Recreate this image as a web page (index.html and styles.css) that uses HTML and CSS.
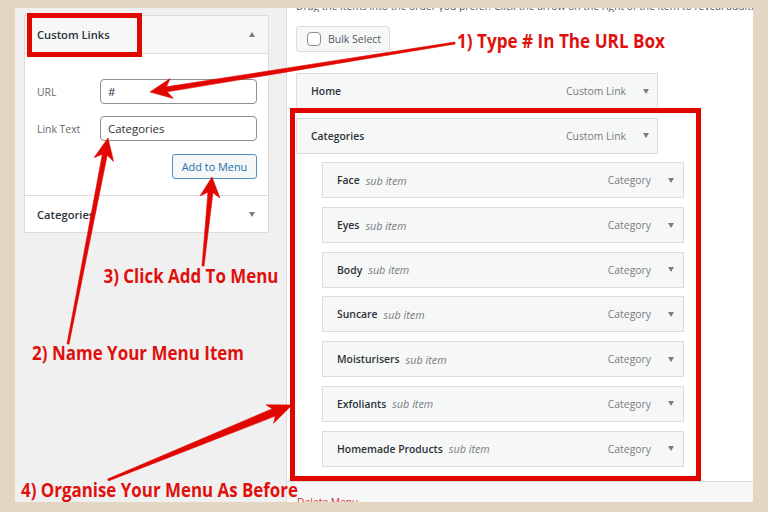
FILE: index.html
```html
<!DOCTYPE html>
<html lang="en">
<head>
<meta charset="utf-8">
<title>Menus - Custom Links</title>
<link rel="stylesheet" href="styles.css">
</head>
<body>
<div class="shot">
  <aside class="side">
    <div class="acc">
      <div class="acc-head open"><span>Custom Links</span><i class="tri up"></i></div>
      <div class="acc-body">
        <label class="lbl">URL</label>
        <input class="inp" type="text" value="#">
        <label class="lbl">Link Text</label>
        <input class="inp" type="text" value="Categories">
        <div class="actions"><button class="btn" type="button">Add to Menu</button></div>
      </div>
      <div class="acc-head closed"><span>Categories</span><i class="tri"></i></div>
    </div>
  </aside>
  <main class="menu">
    <p class="desc">Drag the items into the order you prefer. Click the arrow on the right of the item to reveal additional configuration options.</p>
    <div class="bulk"><span class="cb"></span>Bulk Select</div>
    <ul class="items">
      <li class="item"><span class="title">Home</span><span class="type">Custom Link</span><i class="tri"></i></li>
      <li class="item"><span class="title">Categories</span><span class="type">Custom Link</span><i class="tri"></i></li>
      <li class="item sub"><span class="title">Face</span><em class="note">sub item</em><span class="type">Category</span><i class="tri"></i></li>
      <li class="item sub"><span class="title">Eyes</span><em class="note">sub item</em><span class="type">Category</span><i class="tri"></i></li>
      <li class="item sub"><span class="title">Body</span><em class="note">sub item</em><span class="type">Category</span><i class="tri"></i></li>
      <li class="item sub"><span class="title">Suncare</span><em class="note">sub item</em><span class="type">Category</span><i class="tri"></i></li>
      <li class="item sub"><span class="title">Moisturisers</span><em class="note">sub item</em><span class="type">Category</span><i class="tri"></i></li>
      <li class="item sub"><span class="title">Exfoliants</span><em class="note">sub item</em><span class="type">Category</span><i class="tri"></i></li>
      <li class="item sub"><span class="title">Homemade Products</span><em class="note">sub item</em><span class="type">Category</span><i class="tri"></i></li>
    </ul>
    <div class="footer"><span class="delete">Delete Menu</span></div>
  </main>
</div>

<div class="hl hl-head"></div>
<div class="hl hl-list"></div>

<svg class="annot" width="768" height="512" viewBox="0 0 768 512" xmlns="http://www.w3.org/2000/svg">
  <g class="arrow">
    <polygon points="454.84,42.01 455.16,43.99 165.6,92.1 164.8,87.1"/>
    <polygon points="150,92 170.1,78.6 165.2,89.6 173.3,98.4"/>
  </g>
  <g class="arrow">
    <polygon points="67.02,343.81 68.98,344.19 107.55,153.58 102.65,152.62"/>
    <polygon points="108,138 113.6,161.5 105.1,153.1 94,157.7"/>
  </g>
  <g class="arrow">
    <polygon points="202,265.9 204,266.1 213.1,191.2 208.1,190.6"/>
    <polygon points="212,177 219.95,197.9 210.6,190.9 200.05,195.9"/>
  </g>
  <g class="arrow">
    <polygon points="107.62,479.07 108.38,480.93 277.8,415.1 274.8,407.7"/>
    <polygon points="292,405 273.6,423.3 276.3,411.4 266,404.8"/>
  </g>
  <text x="457" y="48" textLength="208" lengthAdjust="spacingAndGlyphs">1) Type # In The URL Box</text>
  <text x="32" y="360" textLength="212" lengthAdjust="spacingAndGlyphs">2) Name Your Menu Item</text>
  <text x="103.5" y="283" textLength="175" lengthAdjust="spacingAndGlyphs">3) Click Add To Menu</text>
  <text x="21" y="497" textLength="277" lengthAdjust="spacingAndGlyphs">4) Organise Your Menu As Before</text>
</svg>
</body>
</html>
```

FILE: styles.css
```css
* { box-sizing: border-box; }

html, body {
  margin: 0;
  padding: 0;
}

body {
  width: 768px;
  height: 512px;
  background: #e3d6c2;
  font-family: "Open Sans", "Noto Sans", sans-serif;
  color: #2c3338;
  position: relative;
  overflow: hidden;
}

.shot {
  margin: 8px 0 0 15px;
  width: 738px;
  height: 494px;
  display: flex;
  overflow: hidden;
}

/* ---------- left column ---------- */
.side {
  width: 272px;
  flex: none;
  background: #f0f0f1;
  border-right: 1px solid #dcdcde;
  padding: 7px 0 0 9px;
}

.acc {
  width: 245px;
  background: #fff;
  border: 1px solid #dcdcde;
}

.acc-head {
  display: flex;
  align-items: center;
  padding: 0 13px 0 12px;
  font-size: 11.2px;
  font-weight: 600;
  color: #2c3338;
}

.acc-head span { flex: 1; }

.acc-head.open {
  height: 38px;
  background: #f6f7f7;
  border-bottom: 1px solid #dcdcde;
}

.acc-head.closed {
  height: 36px;
  background: #fff;
}

.acc-body {
  display: grid;
  grid-template-columns: 63px 1fr;
  row-gap: 12px;
  align-items: center;
  padding: 25px 11px 16px 12px;
  border-bottom: 1px solid #dcdcde;
}

.lbl {
  font-size: 10.4px;
  color: #646970;
}

.inp {
  width: 100%;
  height: 25px;
  margin: 0;
  padding: 0 7px;
  border: 1px solid #8c8f94;
  border-radius: 4px;
  background: #fff;
  font-family: "Open Sans", "Noto Sans", sans-serif;
  font-size: 11.4px;
  color: #2c3338;
}

.actions {
  grid-column: 1 / 3;
  display: flex;
  justify-content: flex-end;
  margin-top: 1px;
}

.btn {
  width: 85px;
  height: 25px;
  padding: 0;
  border: 1px solid #4f8fc4;
  border-radius: 3px;
  background: #f6f7f7;
  color: #2271b1;
  font-family: "Open Sans", "Noto Sans", sans-serif;
  font-size: 10.9px;
}

/* triangles */
.tri {
  display: block;
  width: 0;
  height: 0;
  border-left: 3.5px solid transparent;
  border-right: 3.5px solid transparent;
  border-top: 5px solid #787c82;
}

.tri.up {
  border-top: 0;
  border-bottom: 5px solid #787c82;
}

/* ---------- right column ---------- */
.menu {
  flex: 1;
  background: #fff;
  padding-left: 9px;
  display: flex;
  flex-direction: column;
  min-width: 0;
}

.desc {
  margin: -8px 0 0;
  font-size: 10.3px;
  line-height: 12px;
  color: #50575e;
  white-space: nowrap;
  overflow: hidden;
}

.bulk {
  margin-top: 14px;
  width: 94px;
  height: 26px;
  display: flex;
  align-items: center;
  gap: 7px;
  padding-left: 10px;
  background: #f6f7f7;
  border: 1px solid #dcdcde;
  border-radius: 3px;
  font-size: 10.5px;
  color: #50575e;
}

.cb {
  width: 14px;
  height: 14px;
  border: 1px solid #8c8f94;
  border-radius: 4px;
  background: #fff;
}

.items {
  list-style: none;
  margin: 21px 0 0;
  padding: 0;
}

.item {
  width: 362px;
  height: 36px;
  margin-bottom: 8.7px;
  display: flex;
  align-items: center;
  padding: 0 8px 0 14px;
  background: #f6f7f7;
  border: 1px solid #dcdcde;
  font-size: 10.4px;
}

.item.sub {
  margin-left: 26px;
  padding-right: 9px;
}

.title {
  font-weight: 600;
  color: #2c3338;
}

.note {
  margin-left: 6px;
  color: #787c82;
  font-style: italic;
  font-size: 10.8px;
}

.type {
  margin-left: auto;
  color: #787c82;
}

.item .tri { margin-left: 17px; }

.footer {
  margin-top: auto;
  margin-left: -9px;
  height: 21px;
  flex: none;
  background: #f6f7f7;
  border-top: 1px solid #dcdcde;
  padding: 13px 0 0 10px;
  font-size: 10.3px;
  line-height: 14px;
  overflow: hidden;
}

.delete { color: #d63638; }

/* ---------- annotation overlay ---------- */
.hl {
  position: absolute;
  border: 5px solid #e10600;
}

.hl-head {
  left: 27px;
  top: 13px;
  width: 115px;
  height: 44px;
}

.hl-list {
  left: 290px;
  top: 108px;
  width: 411px;
  height: 373px;
}

.annot {
  position: absolute;
  left: 0;
  top: 0;
  pointer-events: none;
}

.annot .arrow polygon {
  fill: #e10600;
  stroke: #e10600;
  stroke-width: 0.6;
  stroke-linejoin: round;
}

.annot text {
  font-family: "Open Sans", "Noto Sans", sans-serif;
  font-weight: 700;
  font-size: 18.8px;
  fill: #e0110d;
}
```
